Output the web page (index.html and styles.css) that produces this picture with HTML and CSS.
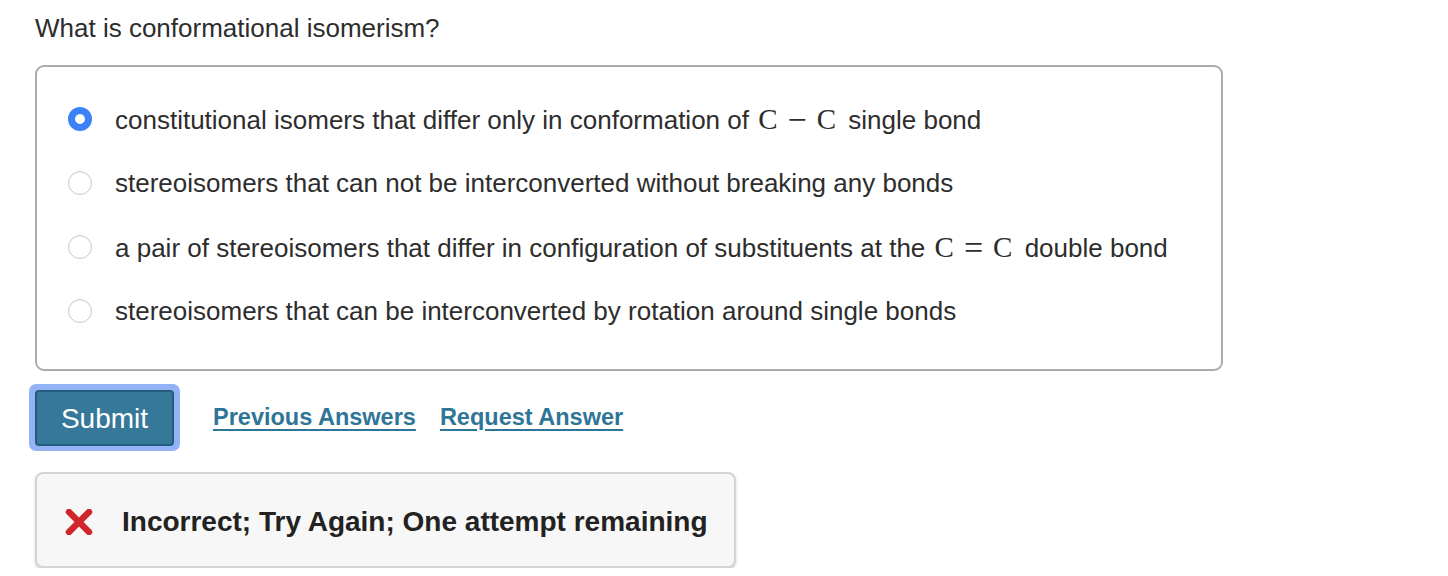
FILE: index.html
```html
<!DOCTYPE html>
<html>
<head>
<meta charset="utf-8">
<link rel="stylesheet" href="styles.css">
</head>
<body>
<div class="page">
  <p class="question">What is conformational isomerism?</p>
  <div class="choices">
    <label class="choice">
      <span class="radio checked"></span>
      <span class="text">constitutional isomers that differ only in conformation of <span class="math">C<span class="op">−</span>C</span> single bond</span>
    </label>
    <label class="choice">
      <span class="radio"></span>
      <span class="text">stereoisomers that can not be interconverted without breaking any bonds</span>
    </label>
    <label class="choice">
      <span class="radio"></span>
      <span class="text">a pair of stereoisomers that differ in configuration of substituents at the <span class="math">C<span class="op">=</span>C</span> double bond</span>
    </label>
    <label class="choice">
      <span class="radio"></span>
      <span class="text">stereoisomers that can be interconverted by rotation around single bonds</span>
    </label>
  </div>
  <div class="actions">
    <span class="focus-ring"><button class="submit">Submit</button></span>
    <a class="link" href="#">Previous Answers</a>
    <a class="link" href="#">Request Answer</a>
  </div>
  <div class="feedback">
    <svg class="xicon" width="28" height="26" viewBox="0 0 28 26">
      <path d="M4 3 L24 23 M24 3 L4 23" stroke="#d0262b" stroke-width="6.5" stroke-linecap="round"/>
    </svg>
    <span class="fb-text">Incorrect; Try Again; One attempt remaining</span>
  </div>
</div>
</body>
</html>
```
FILE: styles.css
```css
html, body {
  margin: 0;
  padding: 0;
  background: #fff;
}
.page {
  padding: 12px 0 0 35px;
  font-family: "Liberation Sans", Arial, sans-serif;
  color: #2d2d2d;
}
.question {
  margin: 0;
  font-size: 26px;
  line-height: 32px;
}
.choices {
  margin-top: 21px;
  width: 1188px;
  box-sizing: border-box;
  border: 2px solid #ababab;
  border-radius: 9px;
  padding: 36px 0 42px 30px;
  display: flex;
  flex-direction: column;
  gap: 32px;
}
.choice {
  display: flex;
  align-items: center;
  height: 32px;
  line-height: 32px;
  font-size: 26px;
}
.text {
  white-space: nowrap;
}
.radio {
  width: 24px;
  height: 24px;
  border-radius: 50%;
  border: 1px solid #c9c9c9;
  background: #fff;
  box-sizing: border-box;
  margin-left: 1px;
  margin-right: 23px;
  box-shadow: inset 0 1px 1px rgba(0,0,0,0.05);
  flex: none;
}
.radio.checked {
  border: 7px solid #3a82f6;
  background: #fff;
}
.math {
  font-family: "Liberation Serif", "Times New Roman", serif;
  font-size: 29px;
  margin: 0 5px 0 2px;
}
.op {
  margin: 0 10px;
  font-size: 34px;
  vertical-align: -2px;
}
.actions {
  margin-top: 13px;
  display: flex;
  align-items: center;
}
.focus-ring {
  display: inline-block;
  padding: 6px 6px 5px 6px;
  background: #94b2f6;
  border-radius: 7px;
  margin-left: -6px;
}
.submit {
  display: block;
  width: 139px;
  height: 56px;
  background: #367899;
  border: 2px solid #245d79;
  border-radius: 4px;
  color: #fff;
  font-family: "Liberation Sans", Arial, sans-serif;
  font-size: 28px;
  padding: 2px 0 0 0;
}
.link {
  font-weight: bold;
  font-size: 23.5px;
  color: #2f7598;
  text-decoration: underline;
  text-underline-offset: 4px;
  text-decoration-thickness: 2px;
}
.actions .link:first-of-type {
  margin-left: 33px;
}
.actions .link + .link {
  margin-left: 24px;
}
.feedback {
  margin-top: 21px;
  width: 701px;
  height: 96px;
  box-sizing: border-box;
  background: #f7f7f7;
  border: 2px solid #d4d4d4;
  border-radius: 8px;
  box-shadow: 0 2px 3px rgba(0,0,0,0.18);
  display: flex;
  align-items: center;
  padding: 3px 0 0 28px;
}
.xicon {
  flex: none;
  margin-right: 29px;
}
.fb-text {
  font-weight: bold;
  font-size: 28px;
  color: #222;
}
```
